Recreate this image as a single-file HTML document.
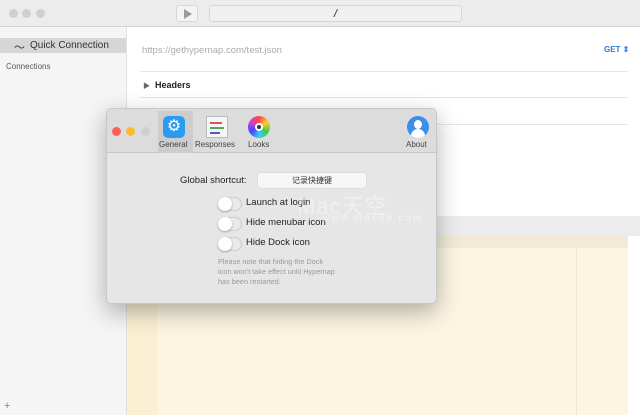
<!DOCTYPE html>
<html><head><meta charset="utf-8"><style>
*{margin:0;padding:0;box-sizing:border-box}
body{width:640px;height:415px;overflow:hidden;background:#fff;font-family:"Liberation Sans","Noto Sans CJK SC",sans-serif;position:relative}
.abs{position:absolute}
</style></head><body>
<div class="abs" style="left:0;top:0;width:640px;height:27px;background:#ececec;border-bottom:1px solid #d4d4d4"></div>
<div class="abs" style="left:9px;top:9px;width:9px;height:9px;border-radius:50%;background:#d0d0d0"></div>
<div class="abs" style="left:22px;top:9px;width:9px;height:9px;border-radius:50%;background:#d0d0d0"></div>
<div class="abs" style="left:36px;top:9px;width:9px;height:9px;border-radius:50%;background:#d0d0d0"></div>
<div class="abs" style="left:176px;top:5px;width:22px;height:17px;border:1px solid #d6d6d6;border-radius:3px;background:#f4f4f4"></div>
<div class="abs" style="left:184px;top:9px;width:0;height:0;border-left:8px solid #999;border-top:5px solid transparent;border-bottom:5px solid transparent"></div>
<div class="abs" style="left:209px;top:5px;width:253px;height:17px;border:1px solid #d6d6d6;border-radius:3px;background:#f0f0f0"></div>
<div class="abs" style="left:334px;top:8px;font-size:11px;color:#222;font-style:italic">/</div>
<div class="abs" style="left:0;top:27px;width:127px;height:388px;background:#f5f5f5;border-right:1px solid #e0e0e0"></div>
<div class="abs" style="left:0;top:38px;width:126px;height:15px;background:#d6d6d6"></div>
<div class="abs" style="left:14px;top:39px;font-size:11px;color:#333">〜</div>
<div class="abs" style="left:30px;top:40px;font-size:10px;color:#333">Quick Connection</div>
<div class="abs" style="left:6px;top:62px;font-size:8px;color:#555">Connections</div>
<div class="abs" style="left:4px;top:400px;font-size:11px;color:#888">+</div>
<div class="abs" style="left:142px;top:45px;font-size:9.5px;color:#aaa">https://gethypernap.com/test.json</div>
<div class="abs" style="left:604px;top:45px;font-size:8px;color:#2a7ad8;font-weight:bold">GET ⇕</div>
<div class="abs" style="left:140px;top:71px;width:488px;height:1px;background:#e6e6e6"></div>
<div class="abs" style="left:143px;top:80px;font-size:9px;color:#222"><span style="font-size:7px;color:#666">▶</span>&nbsp; <b>Headers</b></div>
<div class="abs" style="left:140px;top:97px;width:488px;height:1px;background:#e6e6e6"></div>
<div class="abs" style="left:140px;top:124px;width:488px;height:1px;background:#e6e6e6"></div>
<div class="abs" style="left:127px;top:216px;width:513px;height:20px;background:#ececec"></div>
<div class="abs" style="left:127px;top:236px;width:501px;height:179px;background:#fcf5e2"></div>
<div class="abs" style="left:157px;top:236px;width:471px;height:12px;background:#f2ead7"></div>
<div class="abs" style="left:127px;top:236px;width:30px;height:179px;background:#fbf0d3"></div>
<div class="abs" style="left:576px;top:248px;width:1px;height:167px;background:#efe6d0"></div>
<div class="abs" style="left:106px;top:108px;width:331px;height:196px;background:#e6e6e6;border-radius:5px;box-shadow:0 8px 24px rgba(0,0,0,.3);border:1px solid #c8c8c8;overflow:hidden">
 <div class="abs" style="left:0;top:0;width:331px;height:44px;background:#dcdcdc;border-bottom:1px solid #c8c8c8"></div>
 <div class="abs" style="left:51px;top:2px;width:35px;height:42px;background:#cdcdcd"></div>
 <div class="abs" style="left:5px;top:18px;width:9px;height:9px;border-radius:50%;background:#fc5f57"></div>
 <div class="abs" style="left:19px;top:18px;width:9px;height:9px;border-radius:50%;background:#fdbc2e"></div>
 <div class="abs" style="left:34px;top:18px;width:9px;height:9px;border-radius:50%;background:#d0d0d0"></div>
 <div class="abs" style="left:56px;top:7px;width:22px;height:22px;border-radius:5px;background:#2a9bf0;color:#fff;font-size:16px;text-align:center;line-height:22px">⚙</div>
 <div class="abs" style="left:99px;top:7px;width:22px;height:22px;background:#f6f6f6;border:1px solid #bbb"></div>
 <div class="abs" style="left:103px;top:13px;width:12px;height:2px;background:#d55"></div>
 <div class="abs" style="left:103px;top:18px;width:14px;height:2px;background:#5a5"></div>
 <div class="abs" style="left:103px;top:23px;width:10px;height:2px;background:#55c"></div>
 <div class="abs" style="left:141px;top:7px;width:22px;height:22px;border-radius:50%;background:conic-gradient(#f44,#fc3,#4c4,#3cf,#44f,#c4c,#f44)"></div>
 <div class="abs" style="left:148px;top:14px;width:8px;height:8px;border-radius:50%;background:#333;border:2px solid #fff"></div>
 <div class="abs" style="left:300px;top:7px;width:22px;height:22px;border-radius:50%;background:#3d8ee8;overflow:hidden">
  <div class="abs" style="left:7px;top:4px;width:8px;height:9px;border-radius:50%;background:#fff"></div>
  <div class="abs" style="left:4px;top:13px;width:14px;height:9px;border-radius:7px 7px 0 0;background:#fff"></div>
 </div>
 <div class="abs" style="left:52px;top:31px;font-size:8px;color:#444">General</div>
 <div class="abs" style="left:88px;top:31px;font-size:8px;color:#444">Responses</div>
 <div class="abs" style="left:141px;top:31px;font-size:8px;color:#444">Looks</div>
 <div class="abs" style="left:299px;top:31px;font-size:8px;color:#444">About</div>
 <div class="abs" style="left:73px;top:66px;font-size:9.5px;color:#222">Global shortcut:</div>
 <div class="abs" style="left:151px;top:64px;width:108px;height:15px;background:#f6f6f6;border-radius:3px;box-shadow:0 0 1px #aaa;font-size:8px;color:#333;text-align:center;line-height:15px">记录快捷键</div>
 <div class="abs" style="left:111px;top:88px;width:24px;height:14px;border-radius:7px;background:#e9e9e9;border:1px solid #ccc"></div>
 <div class="abs" style="left:111px;top:88px;width:14px;height:14px;border-radius:50%;background:#fff;box-shadow:0 1px 2px rgba(0,0,0,.3)"></div>
 <div class="abs" style="left:139px;top:88px;font-size:9.5px;color:#222">Launch at login</div>
 <div class="abs" style="left:111px;top:108px;width:24px;height:14px;border-radius:7px;background:#e9e9e9;border:1px solid #ccc"></div>
 <div class="abs" style="left:111px;top:108px;width:14px;height:14px;border-radius:50%;background:#fff;box-shadow:0 1px 2px rgba(0,0,0,.3)"></div>
 <div class="abs" style="left:139px;top:108px;font-size:9.5px;color:#222">Hide menubar icon</div>
 <div class="abs" style="left:111px;top:128px;width:24px;height:14px;border-radius:7px;background:#e9e9e9;border:1px solid #ccc"></div>
 <div class="abs" style="left:111px;top:128px;width:14px;height:14px;border-radius:50%;background:#fff;box-shadow:0 1px 2px rgba(0,0,0,.3)"></div>
 <div class="abs" style="left:139px;top:128px;font-size:9.5px;color:#222">Hide Dock icon</div>
 <div class="abs" style="left:111px;top:148px;font-size:7.3px;color:#999;line-height:10px">Please note that hiding the Dock<br>icon won't take effect until Hypernap<br>has been restarted.</div>
 <div class="abs" style="left:190px;top:80px;font-size:22px;color:rgba(255,255,255,.4);letter-spacing:1px">Mac天空</div>
 <div class="abs" style="left:215px;top:104px;font-size:10px;color:rgba(255,255,255,.5);letter-spacing:2px">www.mac69.com</div>
</div>
</body></html>
